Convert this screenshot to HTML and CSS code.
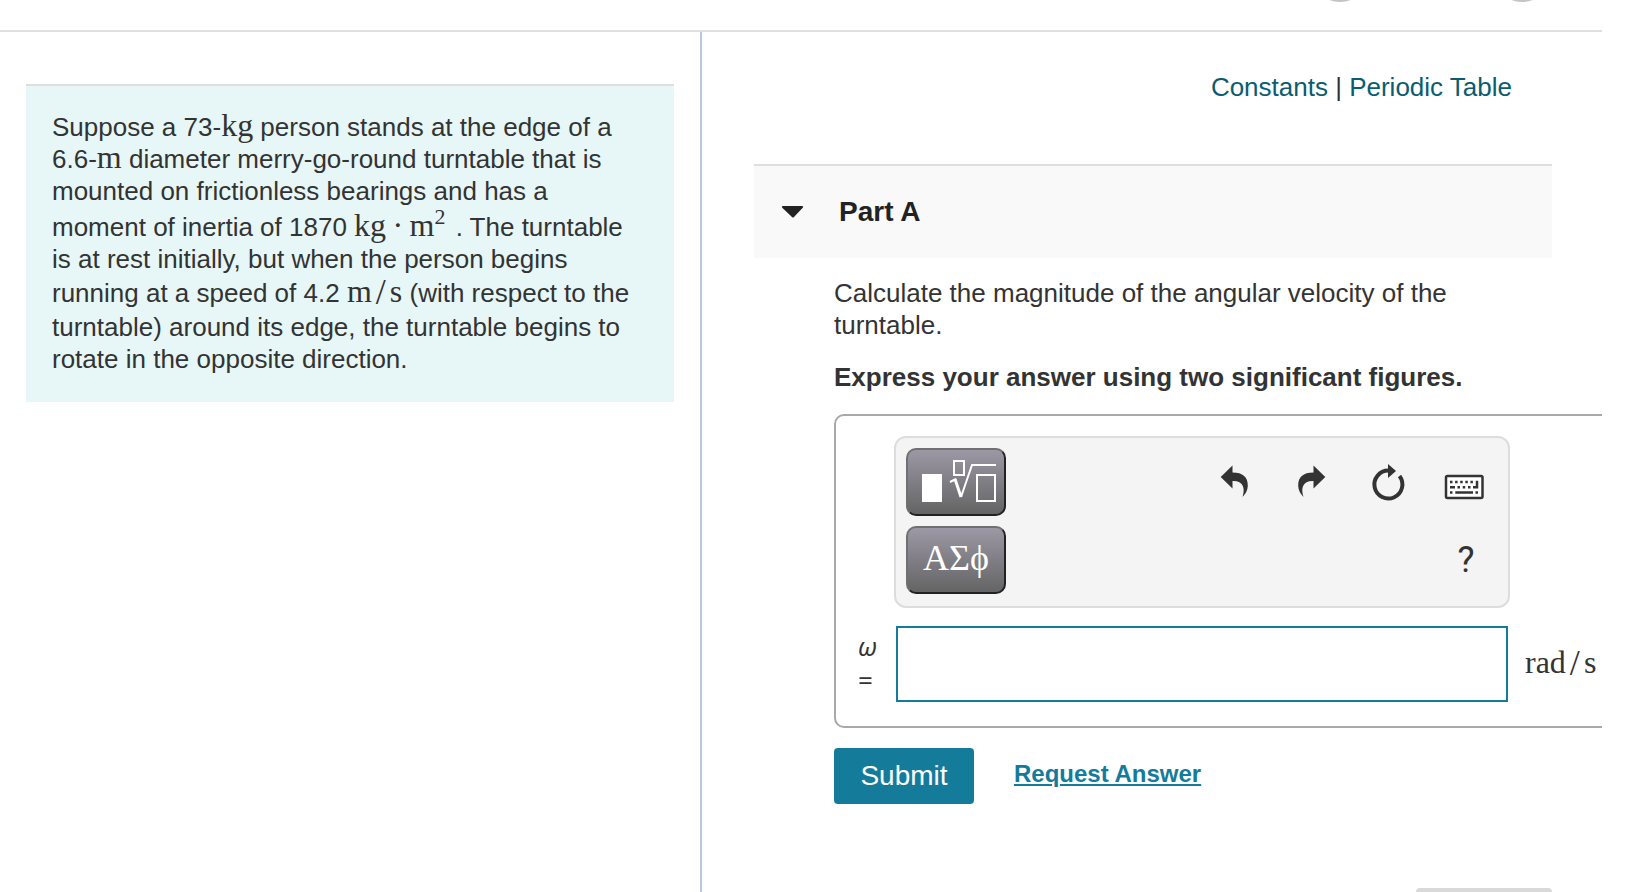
FILE: index.html
```html
<!DOCTYPE html>
<html lang="en">
<head>
<meta charset="utf-8">
<title>Part A</title>
<link rel="stylesheet" href="styles.css">
</head>
<body>
<div class="app">
  <header class="topbar">
    <span class="dot"></span>
    <span class="dot"></span>
  </header>
  <main class="columns">
    <section class="problem">
      <p class="statement">Suppose a 73-<span class="math">kg</span> person stands at the edge of a<br>6.6-<span class="math">m</span> diameter merry-go-round turntable that is<br>mounted on frictionless bearings and has a<br>moment of inertia of 1870 <span class="math power">kg&thinsp;·&thinsp;m<sup>2</sup></span> . The turntable<br>is at rest initially, but when the person begins<br>running at a speed of 4.2 <span class="math ratio">m<span class="slash">/</span>s</span> (with respect to the<br>turntable) around its edge, the turntable begins to<br>rotate in the opposite direction.</p>
    </section>
    <section class="work">
      <nav class="links"><a href="#">Constants</a> | <a href="#">Periodic Table</a></nav>
      <div class="part">
        <button class="toggle" type="button" aria-label="Collapse Part A">
          <svg width="22" height="12" viewBox="0 0 22 12"><path d="M1 0H20Q22 0 20.500 2L12 11Q11 12 10 11L.5 2Q-1 0 1 0Z" fill="#222"/></svg>
        </button>
        <h2 class="part-title">Part A</h2>
      </div>
      <div class="body">
        <p class="question">Calculate the magnitude of the angular velocity of the turntable.</p>
        <p class="hint">Express your answer using two significant figures.</p>
        <div class="answer">
          <div class="toolbar">
            <div class="palettes">
              <button class="palette" type="button" aria-label="Templates">
                <svg width="76" height="44" viewBox="0 0 76 44" fill="none" stroke="#fff" stroke-width="2"><rect x="4" y="14" width="20" height="28" fill="#fff" stroke="none"/><rect x="36" y="1" width="10" height="14"/><rect x="59" y="15" width="18" height="26"/><path d="M32 22L38 19M43 37L54 5H78"/><path d="M37 19L43 37" stroke-width="3"/></svg>
              </button>
              <button class="palette greek" type="button">ΑΣϕ</button>
            </div>
            <div class="tools">
              <button class="tool" type="button" aria-label="Undo"><svg viewBox="0 0 40 40"><path d="M5.700 19L17.500 7.500V14.500C28 14.500 33 19 32.800 28Q32.500 34 27.500 39C30.500 30 28 22.500 17.500 23V30.500Z" fill="#333"/></svg></button>
              <button class="tool" type="button" aria-label="Redo"><svg viewBox="0 0 40 40"><path d="M33.300 19L21.500 7.500V14.500C11 14.500 6 19 6.200 28Q6.500 34 11.500 39C8.500 30 11 22.500 21.500 23V30.500Z" fill="#333"/></svg></button>
              <button class="tool" type="button" aria-label="Reset"><svg viewBox="0 0 40 40"><path d="M19.500 12.500A14 14 0 1 0 30.500 18" fill="none" stroke="#333" stroke-width="4"/><path d="M19 6L27 13L19 20Z" fill="#333"/></svg></button>
              <button class="tool" type="button" aria-label="Keyboard"><svg viewBox="0 0 40 40"><rect x="0" y="18" width="36.500" height="22" rx="1.500" fill="#fff" stroke="#333" stroke-width="2.500"/><g fill="none" stroke="#333" stroke-width="2.500"><path d="M4 24H27" stroke-dasharray="2.500 2.600"/><path d="M4 29.300H9M11.500 29.300H14M16.700 29.300H19.200M22 29.300H24.500M27 29.300H31V22.700M4 34.500H6.500M9.300 34.500H27M29.500 34.500H32"/></g></svg></button>
              <button class="tool help" type="button" aria-label="Help">?</button>
            </div>
          </div>
          <label class="symbol" for="omega"><i>ω</i><span>=</span></label>
          <input class="entry" id="omega" type="text">
          <span class="math units">rad<span class="slash">/</span>s</span>
        </div>
        <div class="actions">
          <button class="submit" type="button">Submit</button>
          <a class="request" href="#">Request Answer</a>
        </div>
      </div>
      <div class="next"></div>
    </section>
  </main>
</div>
</body>
</html>
```
FILE: styles.css
```css
* { box-sizing: border-box; }
body {
  margin: 0;
  padding-right: 46px;
  background: #fff;
  color: #333;
  font: 26px/32px "Liberation Sans", Arial, sans-serif;
  overflow: hidden;
}
p, h2 { margin: 0; }
button { font: inherit; color: inherit; border: 0; padding: 0; background: none; }
svg { display: block; overflow: visible; }
.app { display: flex; flex-direction: column; height: 100vh; overflow: hidden; }
.topbar {
  display: flex;
  justify-content: flex-end;
  align-items: flex-end;
  gap: 122px;
  height: 32px;
  flex: none;
  padding: 0 50px 28px 0;
  border-bottom: 2px solid #e0e0e0;
  overflow: hidden;
}
.dot { flex: none; width: 60px; height: 60px; border-radius: 50%; background: #c4c4c4; }
.columns { display: grid; grid-template-columns: 700fr 902fr; flex: 1; min-height: 0; }
.problem { padding: 52px 26px; }
.statement {
  padding: 25px 26px 27px;
  border-top: 2px solid #dedede;
  background: #e7f7f7;
  white-space: nowrap;
}
.math { font-family: "Liberation Serif", serif; font-size: 32px; line-height: 24px; }
.math sup { font-size: 22px; line-height: 20px; vertical-align: 12px; }
.slash { margin: 0 4px; font-size: 36px; line-height: 16px; vertical-align: -2px; }
.power, .ratio { display: inline-block; }
.power { margin-right: 3px; }
.ratio { padding: 4px 0 8px; }
.work {
  display: flex;
  flex-direction: column;
  min-width: 0;
  padding: 39px 50px 0 52px;
  border-left: 2px solid #b8c9de;
}
.links { text-align: right; padding-right: 40px; margin-bottom: 61px; }
.links a { color: #0a5c70; text-decoration: none; }
.part {
  display: flex;
  align-items: center;
  gap: 35px;
  padding: 30px 28px;
  border-top: 2px solid #dedede;
  background: #f9f9f9;
}
.part-title { font-size: 28px; line-height: 32px; color: #222; }
.body { padding: 19px 0 0 80px; }
.hint { margin: 20px 0 21px; font-weight: bold; white-space: nowrap; }
.answer {
  display: grid;
  grid-template-columns: 36px minmax(0, 1fr) 100px;
  row-gap: 18px;
  margin-right: -60px;
  padding: 20px 0 24px 22px;
  border: 2px solid #a9a9a9;
  border-radius: 10px;
}
.toolbar {
  grid-column: 2;
  display: flex;
  justify-content: space-between;
  padding: 10px 10px 12px;
  border: 2px solid #ddd;
  border-radius: 12px;
  background: #f4f4f4;
}
.palettes { display: grid; gap: 10px; }
.palette {
  width: 100px;
  height: 68px;
  padding: 0 10px;
  border: 2px solid;
  border-color: #707070 #222 #222 #707070;
  border-radius: 10px;
  background: linear-gradient(#9c98a5, #646464);
  color: #fff;
}
.greek { padding-bottom: 4px; font: 36px/40px "Liberation Serif", serif; }
.tools {
  display: grid;
  grid-template-columns: repeat(4, 40px);
  grid-template-rows: 40px 40px;
  column-gap: 37px;
  row-gap: 42px;
  padding: 10px 12px;
}
.tool svg { width: 40px; height: 40px; }
.help { grid-column: 4; font: 36px/40px Roboto, sans-serif; }
.symbol {
  grid-column: 1;
  display: flex;
  flex-direction: column;
  gap: 2px;
  padding-top: 4px;
  font-family: "Open Sans", sans-serif;
}
.entry {
  min-width: 0;
  height: 76px;
  margin: 0 2px;
  border: 2px solid #147b9b;
  background: #fff;
  font: inherit;
  padding: 0 12px;
  outline: 0;
}
.units { padding: 24px 0 0 15px; }
.actions { display: flex; gap: 40px; margin-top: 20px; }
.submit {
  width: 140px;
  height: 56px;
  border-radius: 4px;
  background: #147b9b;
  color: #fff;
  font-size: 28px;
}
.request { padding-top: 10px; font-size: 24px; font-weight: bold; color: #147b9b; }
.next {
  align-self: flex-end;
  flex: none;
  width: 136px;
  height: 56px;
  margin-top: 84px;
  border-radius: 4px;
  background: #d9d9d9;
}
```
